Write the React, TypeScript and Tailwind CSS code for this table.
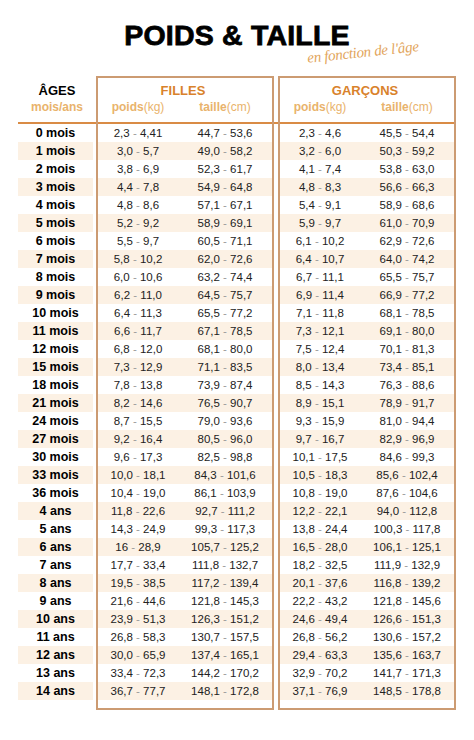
import React from "react";

type Row = [string, string, string, string, string];

const rows: Row[] = [
  ["0 mois", "2,3|4,41", "44,7|53,6", "2,3|4,6", "45,5|54,4"],
  ["1 mois", "3,0|5,7", "49,0|58,2", "3,2|6,0", "50,3|59,2"],
  ["2 mois", "3,8|6,9", "52,3|61,7", "4,1|7,4", "53,8|63,0"],
  ["3 mois", "4,4|7,8", "54,9|64,8", "4,8|8,3", "56,6|66,3"],
  ["4 mois", "4,8|8,6", "57,1|67,1", "5,4|9,1", "58,9|68,6"],
  ["5 mois", "5,2|9,2", "58,9|69,1", "5,9|9,7", "61,0|70,9"],
  ["6 mois", "5,5|9,7", "60,5|71,1", "6,1|10,2", "62,9|72,6"],
  ["7 mois", "5,8|10,2", "62,0|72,6", "6,4|10,7", "64,0|74,2"],
  ["8 mois", "6,0|10,6", "63,2|74,4", "6,7|11,1", "65,5|75,7"],
  ["9 mois", "6,2|11,0", "64,5|75,7", "6,9|11,4", "66,9|77,2"],
  ["10 mois", "6,4|11,3", "65,5|77,2", "7,1|11,8", "68,1|78,5"],
  ["11 mois", "6,6|11,7", "67,1|78,5", "7,3|12,1", "69,1|80,0"],
  ["12 mois", "6,8|12,0", "68,1|80,0", "7,5|12,4", "70,1|81,3"],
  ["15 mois", "7,3|12,9", "71,1|83,5", "8,0|13,4", "73,4|85,1"],
  ["18 mois", "7,8|13,8", "73,9|87,4", "8,5|14,3", "76,3|88,6"],
  ["21 mois", "8,2|14,6", "76,5|90,7", "8,9|15,1", "78,9|91,7"],
  ["24 mois", "8,7|15,5", "79,0|93,6", "9,3|15,9", "81,0|94,4"],
  ["27 mois", "9,2|16,4", "80,5|96,0", "9,7|16,7", "82,9|96,9"],
  ["30 mois", "9,6|17,3", "82,5|98,8", "10,1|17,5", "84,6|99,3"],
  ["33 mois", "10,0|18,1", "84,3|101,6", "10,5|18,3", "85,6|102,4"],
  ["36 mois", "10,4|19,0", "86,1|103,9", "10,8|19,0", "87,6|104,6"],
  ["4 ans", "11,8|22,6", "92,7|111,2", "12,2|22,1", "94,0|112,8"],
  ["5 ans", "14,3|24,9", "99,3|117,3", "13,8|24,4", "100,3|117,8"],
  ["6 ans", "16|28,9", "105,7|125,2", "16,5|28,0", "106,1|125,1"],
  ["7 ans", "17,7|33,4", "111,8|132,7", "18,2|32,5", "111,9|132,9"],
  ["8 ans", "19,5|38,5", "117,2|139,4", "20,1|37,6", "116,8|139,2"],
  ["9 ans", "21,6|44,6", "121,8|145,3", "22,2|43,2", "121,8|145,6"],
  ["10 ans", "23,9|51,3", "126,3|151,2", "24,6|49,4", "126,6|151,3"],
  ["11 ans", "26,8|58,3", "130,7|157,5", "26,8|56,2", "130,6|157,2"],
  ["12 ans", "30,0|65,9", "137,4|165,1", "29,4|63,3", "135,6|163,7"],
  ["13 ans", "33,4|72,3", "144,2|170,2", "32,9|70,2", "141,7|171,3"],
  ["14 ans", "36,7|77,7", "148,1|172,8", "37,1|76,9", "148,5|178,8"],
];

function Range({ v }: { v: string }) {
  const [a, b] = v.split("|");
  return (
    <span>
      {a}
      <span className="text-[#9a9a9a]"> - </span>
      {b}
    </span>
  );
}

function Box({ title, idx }: { title: string; idx: 1 | 3 }) {
  return (
    <div className="w-[178px] border-2 border-[#cc9b72] pb-[8px]">
      <div className="h-[46px] border-b-2 border-[#d98b45] pt-[5px]">
        <div className="text-center text-[13px] leading-[16px] font-bold text-[#d9822b] pr-[4px]">{title}</div>
        <div className="grid grid-cols-[80px_94px] text-[12px] leading-[16px] text-[#e9b36c]">
          <div className="text-center">
            <span className="font-bold">poids</span>
            <span>(kg)</span>
          </div>
          <div className="text-center">
            <span className="font-bold">taille</span>
            <span>(cm)</span>
          </div>
        </div>
      </div>
      {rows.map((r, i) => (
        <div
          key={i}
          className={
            "grid grid-cols-[80px_94px] h-[18px] items-center text-[11.5px] leading-[18px] text-[#222] " +
            (i % 2 === 1 ? "bg-[#fcf1e4]" : "bg-white")
          }
        >
          <div className="text-center">
            <Range v={r[idx]} />
          </div>
          <div className="text-center">
            <Range v={r[idx + 1]} />
          </div>
        </div>
      ))}
    </div>
  );
}

export default function App() {
  return (
    <div className="w-[474px] h-[740px] bg-white overflow-hidden font-['Liberation_Sans',Arial,sans-serif]">
      <div className="relative h-[76px] pt-[21px]">
        <div className="text-center text-[28.5px] leading-[28px] font-bold text-black tracking-[0.2px] [-webkit-text-stroke:0.8px_black]">
          POIDS &amp; TAILLE
        </div>
        <div className="absolute left-[307px] top-[41px] -rotate-[6deg] text-[15px] italic text-[#e2a55c] font-['Liberation_Serif',serif] tracking-[-0.3px]">
          en fonction de l'âge
        </div>
      </div>
      <div className="flex pl-[18px]">
        <div className="w-[78px]">
          <div className="h-[48px] border-b-2 border-[#d98b45] pt-[7px] text-center">
            <div className="text-[13px] leading-[16px] font-bold text-black">ÂGES</div>
            <div className="text-[12px] leading-[16px] font-bold text-[#e9b36c]">mois/ans</div>
          </div>
          {rows.map((r, i) => (
            <div
              key={i}
              className={
                "h-[18px] mr-[3px] text-center text-[12.5px] leading-[18px] font-bold text-black " +
                (i % 2 === 1 ? "bg-[#fcf1e4]" : "bg-white")
              }
            >
              {r[0]}
            </div>
          ))}
        </div>
        <Box title="FILLES" idx={1} />
        <div className="w-[4px]">
          <div className="h-[48px] border-b-2 border-[#d98b45]" />
        </div>
        <Box title="GARÇONS" idx={3} />
      </div>
    </div>
  );
}
